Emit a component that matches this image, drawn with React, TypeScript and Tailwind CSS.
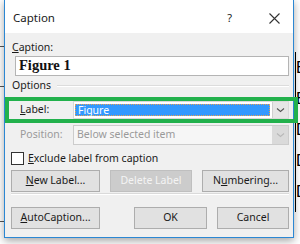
import React from "react";

const ui = "font-['Noto_Sans','Open_Sans',sans-serif]";

function Btn({ children, w, disabled }: { children: React.ReactNode; w: string; disabled?: boolean }) {
  return (
    <div
      className={`${w} h-[22px] flex items-center justify-center text-[10.5px] border ${
        disabled ? "bg-[#cccccc] border-[#bfbfbf] text-[#f4f4f4]" : "bg-[#e1e1e1] border-[#adadad] text-[#1a1a1a]"
      }`}
    >
      {children}
    </div>
  );
}

function Chevron({ color }: { color: string }) {
  return (
    <svg width="9" height="6" viewBox="0 0 9 6">
      <path d="M1 1.5 L4.5 4.5 L8 1.5" fill="none" stroke={color} strokeWidth="1.1" />
    </svg>
  );
}

export default function App() {
  return (
    <div className={`relative w-[300px] h-[244px] bg-white overflow-hidden ${ui}`}>
      {/* document behind the dialog */}
      <div className="absolute left-0 top-[46px] w-[5px] h-[1px] bg-[#555]" />
      <div className="absolute left-0 top-[86px] w-[5px] h-[1px] bg-[#555]" />
      <div className="absolute left-0 top-[221px] w-[5px] h-[1px] bg-[#555]" />
      <div className="absolute left-[295px] top-[52px] w-[1px] h-[160px] bg-black" />
      <div className="absolute left-[296px] top-[52px] flex flex-col font-['Liberation_Sans',sans-serif] text-[16px] leading-[31px] text-black">
        <span>E</span>
        <span>E</span>
        <span>D</span>
        <span>D</span>
        <span>D</span>
      </div>

      {/* dialog window */}
      <div className="absolute left-[4px] top-[-1px] w-[290px] h-[239px] border border-[#2b87d3] bg-[#f0f0f0] flex flex-col shadow-[0_3px_8px_rgba(0,0,0,0.35)]">
        <div className="h-[33px] bg-white flex items-center pl-[8px] pt-[3px] text-[11.5px] text-[#1a1a1a]">
          <span className="flex-1">Caption</span>
          <span className="text-[11px] mr-[37px]">?</span>
          <svg width="11" height="11" viewBox="0 0 11 11" className="mr-[13px]">
            <path d="M0.5 0.5 L10.5 10.5 M10.5 0.5 L0.5 10.5" stroke="#333" strokeWidth="1.1" />
          </svg>
        </div>

        <div className="flex flex-col text-[10.5px] text-[#1a1a1a]">
          <div className="mt-[6px] h-[16px] leading-[16px] pl-[7px]">
            <u>C</u>aption:
          </div>
          <div className="mt-[1px] ml-[10px] w-[274px] h-[20px] bg-white border border-[#b4b4b4] flex items-center pl-[3px] font-['Liberation_Serif',serif] font-bold text-[14.5px] text-[#111]">
            Figure 1
          </div>
          <div className="mt-[2px] h-[16px] flex items-center pl-[7px]">
            <span>Options</span>
            <div className="ml-[6px] w-[232px] border-t border-[#dcdcdc] border-b border-b-white" />
          </div>

          {/* Label row */}
          <div className="mt-[7px] h-[18px] flex items-center">
            <span className="ml-[15px] w-[53px]">
              <u>L</u>abel:
            </span>
            <div className="w-[216px] h-[18px] bg-white border border-[#d9d9d9] flex items-center pl-[1px]">
              <div className="flex-1 h-[12px] bg-[#3399ff] border border-dotted border-[#e8a050] text-white flex items-center pl-[2px] leading-none">
                Figure
              </div>
              <div className="w-[16px] h-[16px] ml-[2px] bg-[#e6e6e6] border-l border-[#cfcfcf] flex items-center justify-center">
                <Chevron color="#555" />
              </div>
            </div>
          </div>

          {/* Position row */}
          <div className="mt-[6px] h-[20px] flex items-center text-[#9a9a9a]">
            <span className="ml-[15px] w-[53px]">Position:</span>
            <div className="w-[216px] h-[20px] bg-[#f6f6f6] border border-[#cccccc] flex items-center">
              <span className="flex-1 pl-[3px]">Below selected item</span>
              <div className="w-[16px] h-[18px] bg-[#dadada] flex items-center justify-center">
                <Chevron color="#b8b8b8" />
              </div>
            </div>
          </div>

          {/* checkbox */}
          <div className="mt-[7px] h-[13px] flex items-center">
            <div className="ml-[6px] w-[13px] h-[13px] bg-white border border-[#333]" />
            <span className="ml-[4px]">
              <u>E</u>xclude label from caption
            </span>
          </div>

          <div className="mt-[5px] ml-[6px] flex">
            <Btn w="w-[89px]">
              <span>
                <u>N</u>ew Label...
              </span>
            </Btn>
            <div className="w-[10px]" />
            <Btn w="w-[82px]" disabled>
              Delete Label
            </Btn>
            <div className="w-[10px]" />
            <Btn w="w-[87px]">
              <span>
                N<u>u</u>mbering...
              </span>
            </Btn>
          </div>

          <div className="mt-[1px] ml-[6px] w-[278px] border-t border-[#dadada] border-b border-b-white" />

          <div className="mt-[12px] ml-[6px] flex">
            <Btn w="w-[89px]">
              <span>
                <u>A</u>utoCaption...
              </span>
            </Btn>
            <div className="w-[34px]" />
            <Btn w="w-[73px]">OK</Btn>
            <div className="w-[10px]" />
            <Btn w="w-[72px]">Cancel</Btn>
          </div>
        </div>
      </div>

      {/* green highlight annotation */}
      <div className="absolute left-[5px] top-[97px] w-[293px] h-[26px] border-[4px] border-[#22b14c]" />
    </div>
  );
}
